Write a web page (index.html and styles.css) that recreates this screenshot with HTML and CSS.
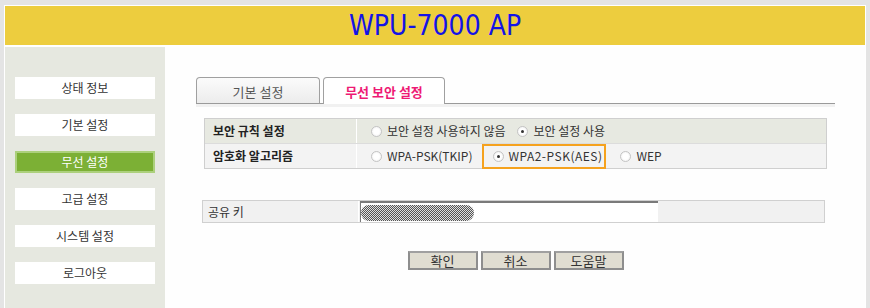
FILE: index.html
```html
<html><head><meta charset="UTF-8">
    <link rel="stylesheet" href="styles.css">
</head>
<body>
    <div id="ramka">
        <div id="naglowek">WPU-7000 AP</div>
        <div id="srodek">
            <div id="menu">
                <div class="przycisk">상태 정보</div>
                <div class="przycisk">기본 설정</div>
                <div class="przycisk aktywny">무선 설정</div>
                <div class="przycisk">고급 설정</div>
                <div class="przycisk">시스템 설정</div>
                <div class="przycisk">로그아웃</div>
            </div>
            <div id="tresc">
                <div id="zakladki">
                    <div class="zakladka">기본 설정</div>
                    <div class="zakladka wybrana">무선 보안 설정</div>
                </div>
                <div class="cien"></div>

                <div id="tabela">
                    <div class="wiersz jasny">
                        <div class="etykieta">보안 규칙 설정</div>
                        <div class="opcje">
                            <span class="radio"></span><span class="napis">보안 설정 사용하지 않음</span>
                            <span class="radio zaznaczony"></span><span class="napis">보안 설정 사용</span>
                        </div>
                    </div>
                    <div class="wiersz szary">
                        <div class="etykieta">암호화 알고리즘</div>
                        <div class="opcje">
                            <span class="radio"></span><span class="napis tkip">WPA-PSK(TKIP)</span>
                            <span class="ramkaWybor"><span class="radio zaznaczony"></span><span class="napis">WPA2-PSK(AES)</span></span>
                            <span class="radio"></span><span class="napis">WEP</span>
                        </div>
                    </div>
                </div>

                <div id="klucz">
                    <div class="etykietaKlucz">공유 키</div>
                    <div class="pole"><span class="maska"></span></div>
                </div>

                <div id="guziki">
                    <div class="guzik">확인</div>
                    <div class="guzik">취소</div>
                    <div class="guzik">도움말</div>
                </div>
            </div>
        </div>
    </div>
</body></html>
```

FILE: styles.css
```css
body {
    margin: 0;
    height: 308px;
    overflow: hidden;
    background-color: #e4e4e4;
    font-family: "Noto Sans CJK KR", "Noto Sans", sans-serif;
    font-size: 12px;
    color: #222;
}

#ramka {
    margin: 5px 4px 0 4px;
    border: 1px solid #fff;
    border-bottom: none;
    height: 302px;
    display: flex;
    flex-direction: column;
}

#naglowek {
    height: 39px;
    border-bottom: 2px solid #fff;
    background-color: #edcd3e;
    color: #1414e6;
    font-family: "DejaVu Sans", sans-serif;
    font-stretch: condensed;
    font-size: 28px;
    line-height: 40px;
    text-align: center;
}

#srodek {
    flex: 1;
    display: flex;
    background-color: #fefefe;
}

#menu {
    width: 160px;
    background-color: #e6e8e0;
    padding-top: 30px;
    display: flex;
    flex-direction: column;
    align-items: center;
    gap: 15px;
}

.przycisk {
    width: 140px;
    height: 22px;
    line-height: 22px;
    background-color: #fff;
    text-align: center;
    color: #333;
}

.przycisk.aktywny {
    box-sizing: border-box;
    background-color: #7cb035;
    border: 2px solid #acd07c;
    line-height: 18px;
    color: #fff;
}

#tresc {
    flex: 1;
    padding: 30px 0 0 31px;
}

#zakladki {
    width: 639px;
    display: flex;
    align-items: flex-end;
    gap: 3px;
    border-bottom: 1px solid #9a9a9a;
}

.zakladka {
    box-sizing: border-box;
    width: 124px;
    height: 26px;
    line-height: 27px;
    border: 1px solid #a0a0a0;
    border-bottom: none;
    border-radius: 4px 4px 0 0;
    background: linear-gradient(#fbfbfb, #ececec);
    text-align: center;
    color: #555;
    font-size: 13px;
}

.zakladka.wybrana {
    width: 122px;
    height: 27px;
    margin-bottom: -1px;
    background: #fff;
    color: #ee1a74;
    font-weight: bold;
}

.cien {
    width: 639px;
    height: 3px;
    background-color: #f1f1f1;
}

#tabela {
    margin: 11px 0 0 8px;
    width: 621px;
    border: 1px solid #cfcfcf;
}

.wiersz {
    display: flex;
    height: 24px;
    line-height: 24px;
}

.wiersz + .wiersz {
    border-top: 1px solid #dcdcdc;
}

.jasny {
    background-color: #e7e9e1;
}

.szary {
    background-color: #f3f3f3;
}

.etykieta {
    width: 143px;
    padding-left: 8px;
    border-right: 1px solid #fff;
    font-weight: bold;
    font-size: 12px;
    color: #222;
}

.opcje {
    display: flex;
    align-items: center;
    padding-left: 14px;
    color: #333;
}

.radio {
    box-sizing: border-box;
    width: 11px;
    height: 11px;
    border: 1px solid #c4c4c4;
    border-radius: 50%;
    background: radial-gradient(#ffffff 40%, #ececec);
    display: flex;
    align-items: center;
    justify-content: center;
}

.radio.zaznaczony::after {
    content: "";
    width: 3px;
    height: 3px;
    border-radius: 50%;
    background-color: #333;
}

.napis {
    margin: 0 12px 0 5px;
}

.napis.tkip {
    margin-right: 10px;
}

.ramkaWybor {
    display: flex;
    align-items: center;
    width: 124px;
    height: 25px;
    margin: 0 14px 0 0;
    padding: 0 0 0 9px;
    border: 2px solid #f5a21e;
    box-sizing: border-box;
}

.ramkaWybor .napis {
    margin: 0 0 0 4px;
    letter-spacing: 0.5px;
}

#klucz {
    margin: 31px 0 0 6px;
    width: 621px;
    height: 21px;
    border: 1px solid #d0d0d0;
    background-color: #f1f1f1;
    display: flex;
}

.etykietaKlucz {
    width: 150px;
    padding-left: 5px;
    line-height: 21px;
    color: #333;
    border-right: 1px solid #fff;
}

.pole {
    width: 297px;
    height: 19px;
    margin-left: 1px;
    border-top: 2px solid #7a7a7a;
    border-left: 1px solid #7a7a7a;
    background-color: #fff;
    display: flex;
    align-items: center;
}

.maska {
    width: 113px;
    height: 16px;
    border-radius: 8px;
    background: repeating-conic-gradient(#555 0 25%, #e0e0e0 0 50%) 0 0 / 2px 2px;
}

#guziki {
    margin: 28px 0 0 0;
    width: 639px;
    display: flex;
    justify-content: center;
    gap: 3px;
}

.guzik {
    box-sizing: border-box;
    width: 70px;
    height: 19px;
    line-height: 15px;
    border: 2px solid #8e8e8e;
    border-top-color: #a0a0a0;
    background-color: #e0ddd1;
    text-align: center;
    font-size: 13px;
    color: #333;
}
```
